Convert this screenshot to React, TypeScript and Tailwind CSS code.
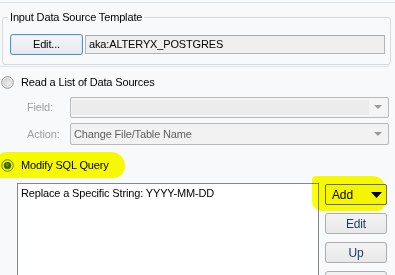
import React from "react";

function RadioOff() {
  return (
    <svg width="13" height="13" viewBox="0 0 13 13" className="shrink-0">
      <defs>
        <linearGradient id="rg1" x1="0" y1="0" x2="1" y2="1">
          <stop offset="0" stopColor="#d2d2d2" />
          <stop offset="1" stopColor="#f4f4f4" />
        </linearGradient>
      </defs>
      <circle cx="6.5" cy="6.5" r="5.8" fill="#f4f4f4" stroke="#8e8f8f" strokeWidth="1" />
      <circle cx="6.5" cy="6.5" r="4" fill="url(#rg1)" stroke="#cfcfcf" strokeWidth="0.8" />
    </svg>
  );
}

function RadioOn() {
  return (
    <svg width="13" height="13" viewBox="0 0 13 13" className="shrink-0">
      <circle cx="6.5" cy="6.5" r="5.8" fill="#e8ee7a" stroke="#7e8530" strokeWidth="1" />
      <circle cx="6.5" cy="6.5" r="3.6" fill="#2f5f14" />
      <circle cx="6.2" cy="6" r="1.8" fill="#5f9a2a" />
    </svg>
  );
}

function ComboArrow() {
  return (
    <svg width="8" height="5" viewBox="0 0 8 5">
      <path d="M0 0 L8 0 L4 4 Z" fill="#9a9a9a" />
    </svg>
  );
}

export default function App() {
  return (
    <div
      className="relative w-[395px] h-[275px] overflow-hidden bg-[#f7f9fb] text-[11px] tracking-[-0.15px] text-black"
      style={{ fontFamily: '"Liberation Sans", Arial, sans-serif' }}
    >
      <div className="pt-[2px]">
        <div className="h-px bg-[#dbe3ec]" />
      </div>

      {/* Group box */}
      <div className="relative mt-[14px] ml-[2px] w-[389px] h-[48px] border border-[#d5dade] rounded-[3px]">
        <div className="absolute -top-[8px] left-[5px] px-[2px] bg-[#f7f9fb] leading-[14px]">
          Input Data Source Template
        </div>
        <div className="flex items-center gap-[2px] pl-[7px] pt-[16px]">
          <div className="w-[73px] h-[21px] flex items-center justify-center rounded-[3px] border border-[#5b8fc7] bg-gradient-to-b from-[#f4f6f8] to-[#e6eaee] shadow-[inset_0_0_0_1px_#d6e6f7]">
            Edit...
          </div>
          <div className="w-[300px] h-[19px] flex items-center pl-[3px] border border-[#b4b4b4] border-t-[#a8a8a8] bg-[#efefef]">
            aka:ALTERYX_POSTGRES
          </div>
        </div>
      </div>

      <div className="mt-px w-[389px] h-px bg-[#dde4ec]" />

      {/* Read a List */}
      <div className="mt-[8px] h-[14px] flex items-center gap-[7px] pl-[1px]">
        <RadioOff />
        <span>Read a List of Data Sources</span>
      </div>

      <div className="mt-[8px] pl-[27px] flex flex-col gap-[5px]">
        <div className="flex items-center">
          <span className="w-[43px] text-[#a3a3a3]">Field:</span>
          <div className="w-[319px] h-[21px] flex items-center border border-[#b9b9b9] rounded-[2px] bg-[#f4f4f4] pl-[1px] pr-[6px]">
            <div className="w-[297px] h-[15px] bg-[#ececec]" />
            <div className="flex-1 flex justify-end">
              <ComboArrow />
            </div>
          </div>
        </div>
        <div className="flex items-center">
          <span className="w-[43px] text-[#a3a3a3]">Action:</span>
          <div className="w-[319px] h-[22px] flex items-center border border-[#b9b9b9] rounded-[2px] bg-[#f2f2f2] pl-[3px] pr-[6px] text-[#5f5f5f]">
            <span className="flex-1">Change File/Table Name</span>
            <ComboArrow />
          </div>
        </div>
      </div>

      {/* Modify SQL Query */}
      <div className="relative mt-[13px] h-[14px] flex items-center gap-[7px] pl-[1px]">
        <RadioOn />
        <span>Modify SQL Query</span>
      </div>

      <div className="mt-[11px] flex gap-[6px] pl-[17px]">
        <div className="w-[302px] h-[120px] border border-[#828790] bg-white pl-[3px] pt-[2px] leading-[14px]">
          Replace a Specific String: YYYY-MM-DD
        </div>
        <div className="pt-[1px] flex flex-col gap-[8px]">
          <div className="w-[62px] h-[21px] flex items-center justify-between pl-[6px] pr-[4px] border border-[#6f6f5a] rounded-[2px] bg-[#f5f500]">
            <span className="text-[12px]">Add</span>
            <svg width="11" height="6" viewBox="0 0 11 6">
              <path d="M0 0 L11 0 L5.5 6 Z" fill="#000" />
            </svg>
          </div>
          <div className="w-[62px] h-[21px] flex items-center justify-center border border-[#adadad] rounded-[3px] bg-gradient-to-b from-[#f3f3f3] to-[#e8e8e8] text-[12px] text-[#1f3a64]">
            Edit
          </div>
          <div className="w-[62px] h-[21px] flex items-center justify-center border border-[#adadad] rounded-[3px] bg-gradient-to-b from-[#f3f3f3] to-[#e8e8e8] text-[12px] text-[#1f3a64]">
            Up
          </div>
          <div className="w-[62px] h-[21px] border border-[#adadad] rounded-[3px] bg-gradient-to-b from-[#f3f3f3] to-[#e8e8e8]" />
        </div>
      </div>

      {/* highlighter marks */}
      <div className="absolute left-[-4px] top-[152px] w-[129px] h-[26px] rounded-[10px_14px_12px_6px] bg-[#ffff00] mix-blend-multiply blur-[0.6px]" />
      <div className="absolute left-[312px] top-[176px] w-[73px] h-[35px] rounded-[4px_12px_8px_10px] bg-[#ffff00] mix-blend-multiply blur-[0.6px]" />
    </div>
  );
}
